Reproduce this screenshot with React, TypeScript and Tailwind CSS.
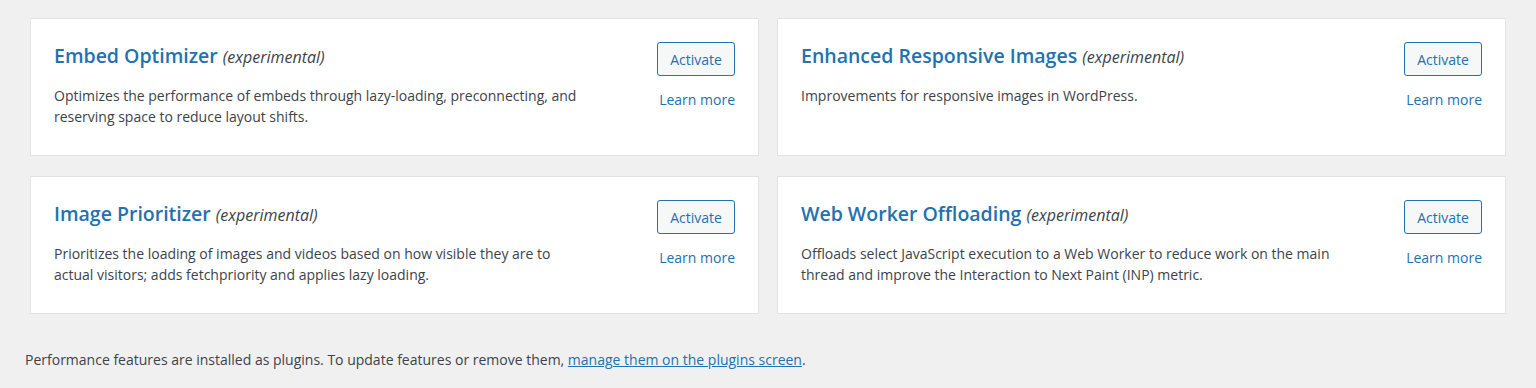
import React from "react";

interface Feature {
  title: string;
  lines: string[];
}

const features: Feature[] = [
  {
    title: "Embed Optimizer",
    lines: [
      "Optimizes the performance of embeds through lazy-loading, preconnecting, and",
      "reserving space to reduce layout shifts.",
    ],
  },
  {
    title: "Enhanced Responsive Images",
    lines: ["Improvements for responsive images in WordPress."],
  },
  {
    title: "Image Prioritizer",
    lines: [
      "Prioritizes the loading of images and videos based on how visible they are to",
      "actual visitors; adds fetchpriority and applies lazy loading.",
    ],
  },
  {
    title: "Web Worker Offloading",
    lines: [
      "Offloads select JavaScript execution to a Web Worker to reduce work on the main",
      "thread and improve the Interaction to Next Paint (INP) metric.",
    ],
  },
];

const FeatureCard = ({ feature }: { feature: Feature }) => {
  return (
    <div className="h-[138px] bg-white border border-[#e2e3e5] flex justify-between pl-[23px] pr-[23px] pt-[23px]">
      <div className="flex flex-col">
        <h3 className="text-[19.5px] leading-[28px] font-semibold text-[#2271b1] whitespace-nowrap">
          {feature.title}{" "}
          <span className="text-[16px] font-normal italic text-[#3c434a]">(experimental)</span>
        </h3>
        <p className="mt-[14px] text-[14px] leading-[21px] text-[#3c434a] whitespace-nowrap">
          {feature.lines.map((line, i) => (
            <React.Fragment key={i}>
              {line}
              {i < feature.lines.length - 1 && <br />}
            </React.Fragment>
          ))}
        </p>
      </div>
      <div className="flex flex-col items-end">
        <button className="h-[34px] w-[78px] rounded-[3px] border border-[#2271b1] bg-[#f6f7f7] text-[14px] text-[#2271b1]">
          Activate
        </button>
        <a href="#" className="mt-[13px] text-[14px] leading-[21px] text-[#2271b1]">
          Learn more
        </a>
      </div>
    </div>
  );
};

const App = () => {
  return (
    <div
      className="min-h-[388px] bg-[#f0f0f1] pt-[18px]"
      style={{ fontFamily: '"Open Sans", "Noto Sans", sans-serif' }}
    >
      <div className="grid grid-cols-2 gap-x-[18px] gap-y-[20px] px-[30px]">
        {features.map((f) => (
          <FeatureCard key={f.title} feature={f} />
        ))}
      </div>
      <p className="mt-[36px] pl-[25px] text-[14px] leading-[20px] text-[#3c434a]">
        Performance features are installed as plugins. To update features or remove them,{" "}
        <a href="#" className="text-[#2271b1] underline">
          manage them on the plugins screen
        </a>
        .
      </p>
    </div>
  );
};

export default App;
